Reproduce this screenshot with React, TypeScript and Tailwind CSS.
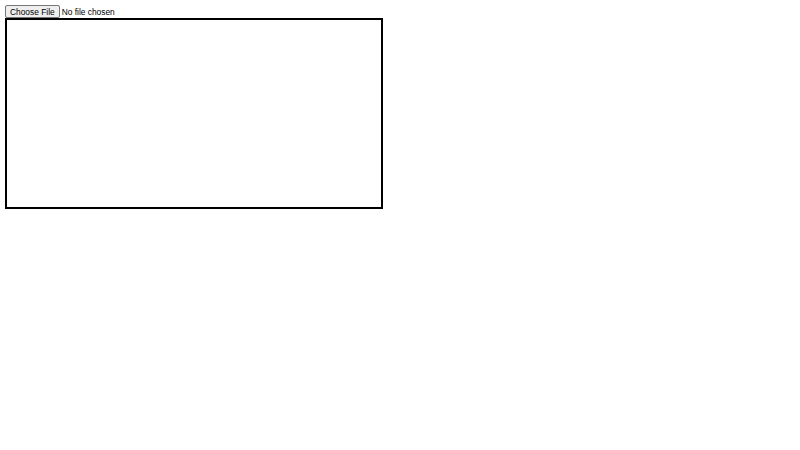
export default function App() {
  return (
    <div className="flex flex-col items-start pl-[5px] pt-[5px] bg-white min-h-[450px]" style={{ fontFamily: '"Liberation Sans", Arial, sans-serif' }}>
      <input
        type="file"
        className="block h-[13px] text-[8.4px] leading-[12px] text-black file:mr-[2px] file:h-[13px] file:px-[4px] file:border file:border-solid file:border-[#767676] file:rounded-[2px] file:bg-[#efefef] file:text-black file:text-[8.4px]"
      />
      <canvas width={374} height={187} className="block w-[378px] h-[191px] border-2 border-black" />
    </div>
  );
}
